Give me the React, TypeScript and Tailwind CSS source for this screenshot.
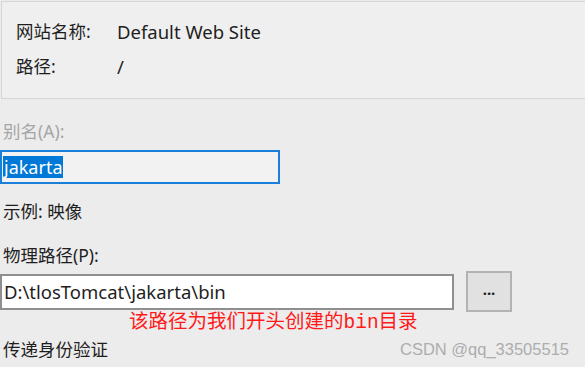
export default function App() {
  const ui = { fontFamily: '"Noto Sans", "Noto Sans CJK SC", sans-serif' };
  const note = { fontFamily: '"Liberation Mono", "Noto Sans CJK SC", monospace' };
  const mark = { fontFamily: '"Liberation Sans", Arial, sans-serif' };

  return (
    <div
      className="relative h-[367px] w-[585px] overflow-hidden bg-[#ececec] text-[17.5px] text-[#1e1e1e]"
      style={ui}
    >
      {/* site info panel */}
      <div className="ml-px mt-px h-[98px] border-y border-l border-[#d6d6d6] bg-[#efefef] pl-[14px] pt-[12px]">
        <div className="flex h-[35px] items-center">
          <span className="w-[101px]">网站名称:</span>
          <span className="text-[18.5px]">Default Web Site</span>
        </div>
        <div className="flex h-[35px] items-center">
          <span className="w-[101px]">路径:</span>
          <span className="text-[18.5px]">/</span>
        </div>
      </div>

      <div className="flex flex-col">
        <div className="mt-[20px] h-[24px] pl-[3px] leading-[24px] text-[#a6a6a6]">别名(A):</div>

        {/* alias input, focused with text selected */}
        <div className="mt-[7px] flex h-[34px] w-[280px] items-center border-2 border-[#1a7fd9] bg-[#f2f2f2] pl-[1px]">
          <span className="bg-[#0078d7] px-[1px] text-[18px] leading-[22px] text-white">jakarta</span>
        </div>

        <div className="mt-[15px] h-[24px] pl-[3px] leading-[24px]">示例: 映像</div>

        <div className="mt-[20px] h-[24px] pl-[3px] leading-[24px]">物理路径(P):</div>

        <div className="mt-[4px] flex items-center gap-[12px]">
          <div className="flex h-[36px] w-[454px] items-center border-2 border-[#8f8f8f] bg-white pl-[2px] text-[18.5px]">
            D:\tlosTomcat\jakarta\bin
          </div>
          <div className="flex h-[41px] w-[46px] items-center justify-center border-2 border-[#b3b3b3] bg-[#e1e1e1] pb-[4px] text-[15px] font-bold leading-none">
            ...
          </div>
        </div>

        <div
          className="ml-[129px] h-[22px] text-[19.5px] leading-[22px] text-[#ff1a1a]"
          style={note}
        >
          该路径为我们开头创建的bin目录
        </div>

        <div className="mt-[1px] flex h-[28px] items-center justify-between pl-[3px] pr-[16px]">
          <span>传递身份验证</span>
          <span className="text-[16.5px] text-[#adadad]" style={mark}>
            CSDN @qq_33505515
          </span>
        </div>
      </div>
    </div>
  );
}
